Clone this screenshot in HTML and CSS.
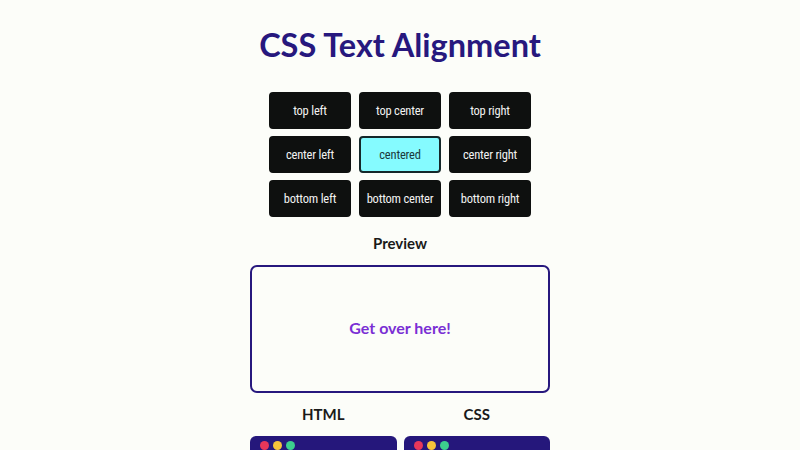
FILE: index.html
```html
<!DOCTYPE html>
<html lang="en">
<head>
<meta charset="utf-8">
<title>CSS Text Alignment</title>
<link rel="stylesheet" href="styles.css">
</head>
<body>
<main class="page">
  <h1 class="title">CSS Text Alignment</h1>
  <div class="grid">
    <button class="btn">top left</button>
    <button class="btn">top center</button>
    <button class="btn">top right</button>
    <button class="btn">center left</button>
    <button class="btn active">centered</button>
    <button class="btn">center right</button>
    <button class="btn">bottom left</button>
    <button class="btn">bottom center</button>
    <button class="btn">bottom right</button>
  </div>
  <h2 class="heading">Preview</h2>
  <div class="preview"><span class="preview-text">Get over here!</span></div>
  <div class="code-row">
    <section class="code-col">
      <h2 class="heading small">HTML</h2>
      <div class="editor"><span class="dot red"></span><span class="dot yellow"></span><span class="dot green"></span></div>
    </section>
    <section class="code-col">
      <h2 class="heading small">CSS</h2>
      <div class="editor"><span class="dot red"></span><span class="dot yellow"></span><span class="dot green"></span></div>
    </section>
  </div>
</main>
</body>
</html>
```
FILE: styles.css
```css
html, body {
  margin: 0;
  padding: 0;
  background: #fcfdf9;
  height: 450px;
  overflow: hidden;
}
.page {
  width: 300px;
  margin: 0 auto;
  display: flex;
  flex-direction: column;
  align-items: center;
  font-family: Lato, "Noto Sans", sans-serif;
}
.title {
  margin: 24px 0 0;
  font-size: 32.5px;
  line-height: 42px;
  font-weight: 700;
  color: #27187e;
  white-space: nowrap;
}
.grid {
  margin-top: 26px;
  display: grid;
  grid-template-columns: repeat(3, 82px);
  grid-auto-rows: 37px;
  column-gap: 8px;
  row-gap: 7px;
}
.btn {
  background: #0e100f;
  color: #f2f2f2;
  border: 2px solid #0e100f;
  border-radius: 4px;
  font-family: "Roboto Condensed", "Liberation Sans Narrow", Roboto, sans-serif;
  font-stretch: condensed;
  font-size: 12.5px;
  letter-spacing: -0.2px;
  padding: 0;
  cursor: pointer;
}
.btn.active {
  background: #85fbff;
  border-color: #15282a;
  color: #1b3a3c;
}
.heading {
  margin: 16px 0 0;
  font-size: 15px;
  line-height: 20px;
  font-weight: 700;
  color: #1a1a1a;
}
.preview {
  margin-top: 12px;
  box-sizing: border-box;
  width: 300px;
  height: 128px;
  border: 2px solid #27187e;
  border-radius: 7px;
  display: flex;
  align-items: center;
  justify-content: center;
  padding-bottom: 3px;
}
.preview-text {
  font-size: 16px;
  font-weight: 700;
  color: #7a2fd4;
}
.code-row {
  width: 300px;
  display: flex;
  gap: 7px;
}
.code-col {
  flex: 1;
  display: flex;
  flex-direction: column;
  align-items: center;
}
.heading.small {
  margin-top: 11px;
}
.editor {
  margin-top: 12px;
  align-self: stretch;
  height: 14px;
  background: #25177b;
  border-radius: 6px 6px 0 0;
  display: flex;
  gap: 4px;
  padding: 5px 10px 0;
  box-sizing: border-box;
  align-items: flex-start;
}
.dot {
  width: 9px;
  height: 9px;
  border-radius: 50%;
}
.red { background: #e8375a; }
.yellow { background: #f6c33b; }
.green { background: #3ccf8e; }
```
